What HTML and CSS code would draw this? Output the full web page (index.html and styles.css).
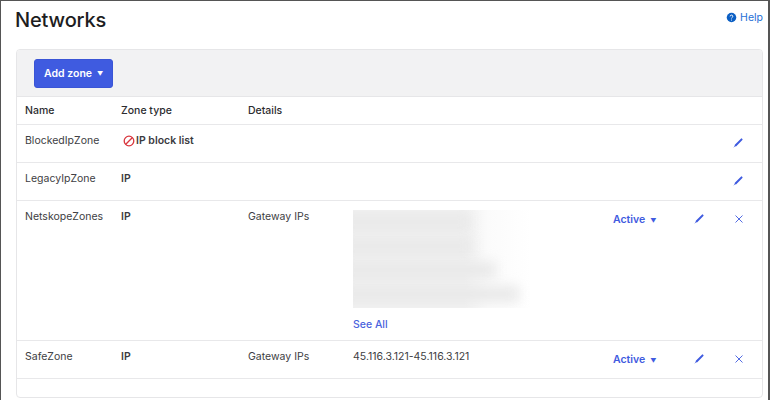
FILE: index.html
```html
<!DOCTYPE html>
<html lang="en">
<head>
<meta charset="utf-8">
<title>Networks</title>
<link rel="stylesheet" href="styles.css">
</head>
<body>
<svg class="defs" width="0" height="0" aria-hidden="true">
  <symbol id="pencil" viewBox="0 0 12 12"><path d="M1.6 10.4 2 8.4 8.6 1.8a.9.9 0 0 1 1.3 0l.3.3a.9.9 0 0 1 0 1.3L3.6 10Z" fill="currentColor"/><path d="M.9 11.2 2 10" stroke="currentColor" stroke-width=".7"/></symbol>
  <symbol id="close" viewBox="0 0 10 10"><path d="M1.5 1.5 8.5 8.5M8.5 1.5 1.5 8.5" stroke="currentColor" stroke-width=".9" fill="none"/></symbol>
</svg>
<header class="top">
  <h1 class="title">Networks</h1>
  <a class="help"><svg class="help-icon" viewBox="0 0 12 12"><circle cx="6" cy="6" r="5.2" fill="#0b5fc4"/><path d="M4.5 4.8a1.5 1.4 0 1 1 2.2 1.2c-.5.3-.7.5-.7 1" stroke="#fff" stroke-width="1" fill="none"/><circle cx="6" cy="8.7" r=".6" fill="#fff"/></svg>Help</a>
</header>
<section class="card">
  <div class="toolbar"><button class="add">Add zone<span class="caret">▼</span></button></div>
  <div class="row head">
    <div>Name</div><div>Zone type</div><div class="c-details">Details</div>
  </div>
  <div class="row short">
    <div class="name">BlockedIpZone</div>
    <div class="type block"><svg class="ban" viewBox="0 0 12 12"><circle cx="6" cy="6" r="4.8" stroke="#d9363e" stroke-width="1.3" fill="none"/><path d="M2.8 9.2 9.2 2.8" stroke="#d9363e" stroke-width="1.3"/></svg>IP block list</div>
    <div class="c-details"></div><div></div><div></div><div></div>
    <div class="act"><svg class="pen"><use href="#pencil"/></svg></div>
  </div>
  <div class="row short">
    <div class="name">LegacyIpZone</div>
    <div class="type">IP</div>
    <div class="c-details"></div><div></div><div></div><div></div>
    <div class="act"><svg class="pen"><use href="#pencil"/></svg></div>
  </div>
  <div class="row tall">
    <div class="name">NetskopeZones</div>
    <div class="type">IP</div>
    <div class="c-details">Gateway IPs</div>
    <div class="ips">
      <div class="blurred" aria-hidden="true">
        <div class="smear s1"></div><div class="smear s2"></div><div class="smear s3"></div><div class="smear s4"></div>
      </div>
      <a class="see">See All</a>
    </div>
    <div class="status">Active<span class="caret small">▼</span></div>
    <div class="act"><svg class="pen"><use href="#pencil"/></svg></div>
    <div class="act"><svg class="x"><use href="#close"/></svg></div>
  </div>
  <div class="row short safe">
    <div class="name">SafeZone</div>
    <div class="type">IP</div>
    <div class="c-details">Gateway IPs</div>
    <div class="ip">45.116.3.121-45.116.3.121</div>
    <div class="status">Active<span class="caret small">▼</span></div>
    <div class="act"><svg class="pen"><use href="#pencil"/></svg></div>
    <div class="act"><svg class="x"><use href="#close"/></svg></div>
  </div>
</section>
</body>
</html>
```
FILE: styles.css
```css
* { box-sizing: border-box; }
html, body { margin: 0; height: 400px; overflow: hidden; }
body {
  width: 770px;
  background: #fff;
  border: solid #555;
  border-width: 1px 2px 0 1px;
  font-family: Inter, "Liberation Sans", sans-serif;
  font-size: 10.5px;
  color: #3d3d42;
  padding: 0 5px 0 15px;
}
.defs { position: absolute; }
.top { display: flex; justify-content: space-between; height: 48px; padding-top: 7px; }
.title { margin: 0 0 0 -1px; font-size: 20px; letter-spacing: -0.15px; line-height: 24px; font-weight: 500; color: #1d1d21; }
.help { display: flex; align-items: center; gap: 3px; height: 20px; font-size: 10.5px; color: #1f6fd6; margin-top: -1px; }
.help-icon { width: 11px; height: 11px; }
.card {
  height: 349px;
  border: 1px solid #e6e6e8;
  border-radius: 4px;
  overflow: hidden;
}
.toolbar { height: 47px; background: #f2f2f3; padding: 9px 0 0 17px; border-bottom: 1px solid #e6e6e8; }
.add {
  display: flex; align-items: center;
  width: 79px; height: 29px; padding: 0 0 0 9px;
  border: 1px solid #3a55d6; border-radius: 3px;
  background: #3f5be0; color: #fff;
  font: 600 10.5px Inter, "Liberation Sans", sans-serif;
}
.caret { font-size: 6px; margin-left: 5px; }
.row {
  display: grid;
  grid-template-columns: 96px 127px 105px 260px 67px 39px 39px;
  border-bottom: 1px solid #e8e8ea;
  padding: 0 0 0 8px;
  line-height: 14px;
}
.head { height: 28px; padding-top: 7px; font-weight: 500; color: #2c2c30; }
.short { height: 38px; padding-top: 9px; }
.tall { height: 140px; padding-top: 9px; }
.type { font-weight: 600; color: #3a3a3e; }
.block { display: flex; align-items: flex-start; gap: 1px; margin-left: 2px; }
.ban { width: 12px; height: 12px; margin-top: 1px; }
.ips { display: flex; flex-direction: column; }
.blurred {
  position: relative;
  width: 178px; height: 98px;
  overflow: hidden;
  background: linear-gradient(90deg, #f1f1f1 0, #f1f1f1 112px, #fbfbfb 135px, #fff 178px);
}
.smear { position: absolute; left: -12px; height: 16px; background: #e9e9e9; filter: blur(6px); }
.s1 { top: 4px; width: 130px; }
.s2 { top: 28px; width: 132px; }
.s3 { top: 52px; width: 155px; }
.s4 { top: 76px; width: 178px; }
.see { margin-top: 10px; color: #4a63dd; font-weight: 500; }
.status { color: #3f5be0; font-weight: 600; padding-top: 3px; }
.act { color: #3f5be0; display: flex; justify-content: center; padding-top: 3px; }
.pen { width: 11px; height: 11px; }
.x { width: 10px; height: 10px; margin-top: 1px; }
```
